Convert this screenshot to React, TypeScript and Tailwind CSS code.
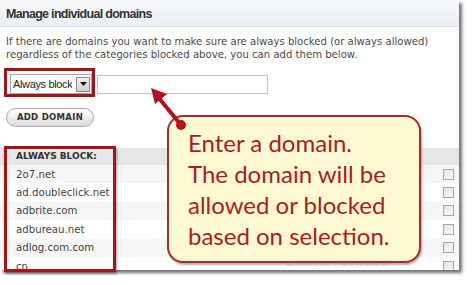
import React from 'react';

const domains = ['2o7.net', 'ad.doubleclick.net', 'adbrite.com', 'adbureau.net', 'adlog.com.com', 'cn'];

function Checkbox() {
  return (
    <span className="block h-[11px] w-[11px] border border-[#a8a8a8] bg-gradient-to-br from-[#e4e4e4] to-[#fafafa]" />
  );
}

export default function App() {
  return (
    <div className="relative h-[285px] w-[474px] overflow-hidden bg-white [font-family:'DejaVu_Sans',Verdana,sans-serif]">
      {/* panel */}
      <div className="relative h-[270px] w-[459px] overflow-hidden bg-white shadow-[3px_3px_3px_rgba(0,0,0,0.55)]">
        <div className="flex h-[27px] items-center border-b border-[#d9dfe6] bg-gradient-to-b from-[#f6f8fb] to-[#ebf0f6] px-[6px] pt-[2px] text-[12.5px] font-bold tracking-[-0.7px] text-[#333] [font-family:'Liberation_Sans',Arial,sans-serif]">
          Manage individual domains
        </div>

        <p className="mt-[8px] px-[6px] text-[10.1px] leading-[13px] text-[#4a4a4a]">
          If there are domains you want to make sure are always blocked (or always allowed)
          <br />
          regardless of the categories blocked above, you can add them below.
        </p>

        <div className="mt-[13px] flex items-center gap-[5px] pl-[10px]">
          <div className="flex h-[20px] w-[82px] items-center justify-between whitespace-nowrap border border-[#a9a9a9] bg-white pl-[2px] pr-[1px] text-[11px] tracking-[-0.35px] text-[#222] [font-family:'Liberation_Sans',Arial,sans-serif]">
            <span className="overflow-hidden">Always block</span>
            <span className="flex h-[15px] w-[14px] shrink-0 items-center justify-center border border-[#8c8c8c] bg-gradient-to-b from-[#f2f2f2] to-[#cfcfcf]">
              <svg width="7" height="4" viewBox="0 0 7 4">
                <path d="M0 0h7L3.5 4z" fill="#111" />
              </svg>
            </span>
          </div>
          <div className="h-[19px] w-[171px] border border-[#c4c4c4] bg-white" />
        </div>

        <button className="ml-[6px] mt-[14px] flex h-[19px] w-[88px] items-center justify-center rounded-full border border-[#a9a9a9] bg-gradient-to-b from-[#ffffff] to-[#dcdcdc] text-[8.5px] font-bold tracking-[0.3px] text-[#333]">
          ADD DOMAIN
        </button>

        <div className="mt-[21px]">
          <div className="flex h-[17px] items-center bg-[#e6e6e6] pl-[16px] pt-[1px] text-[9px] font-bold text-[#333]">
            ALWAYS BLOCK:
          </div>
          {domains.map((d, i) => (
            <div
              key={d}
              className={`flex h-[18.4px] items-center justify-between pl-[16px] pr-[5px] text-[10.2px] text-[#444] ${
                i % 2 === 0 ? 'bg-[#f6f6f6]' : 'bg-white'
              }`}
            >
              <span>{d}</span>
              <Checkbox />
            </div>
          ))}
        </div>

        {/* watermark */}
        <div className="absolute left-[285px] top-[250px] text-[15px] font-bold tracking-[1px] text-[#000]/[0.07] [font-family:'Liberation_Sans',Arial,sans-serif]">
          LearnTomato
        </div>
      </div>

      {/* annotation boxes */}
      <div className="absolute left-[4px] top-[68px] h-[29px] w-[91px] border-[3px] border-[#a3141b]" />
      <div className="absolute left-[4px] top-[146px] h-[126px] w-[112px] border-[3px] border-[#a3141b] shadow-[1px_2px_2px_rgba(0,0,0,0.35)]" />

      {/* callout */}
      <div className="absolute left-[167px] top-[115px] h-[148px] w-[254px] rounded-[16px] border-2 border-[#b3262b] bg-[#fdfad3] pl-[19px] pt-[10px] text-[24px] leading-[31px] text-[#ad1a1f] shadow-[1px_2px_2px_rgba(0,0,0,0.3)] [font-family:Lato,'Open_Sans',sans-serif]">
        Enter a domain.
        <br />
        The domain will be
        <br />
        allowed or blocked
        <br />
        based on selection.
      </div>

      {/* arrow */}
      <svg className="absolute left-0 top-0" width="474" height="285" viewBox="0 0 474 285">
        <line x1="181" y1="125" x2="158" y2="97" stroke="#b3121a" strokeWidth="4" strokeLinecap="round" />
        <path d="M151 88 L167 94 L155 104 Z" fill="#b3121a" />
        <circle cx="181" cy="125" r="5" fill="#b3121a" />
      </svg>
    </div>
  );
}
